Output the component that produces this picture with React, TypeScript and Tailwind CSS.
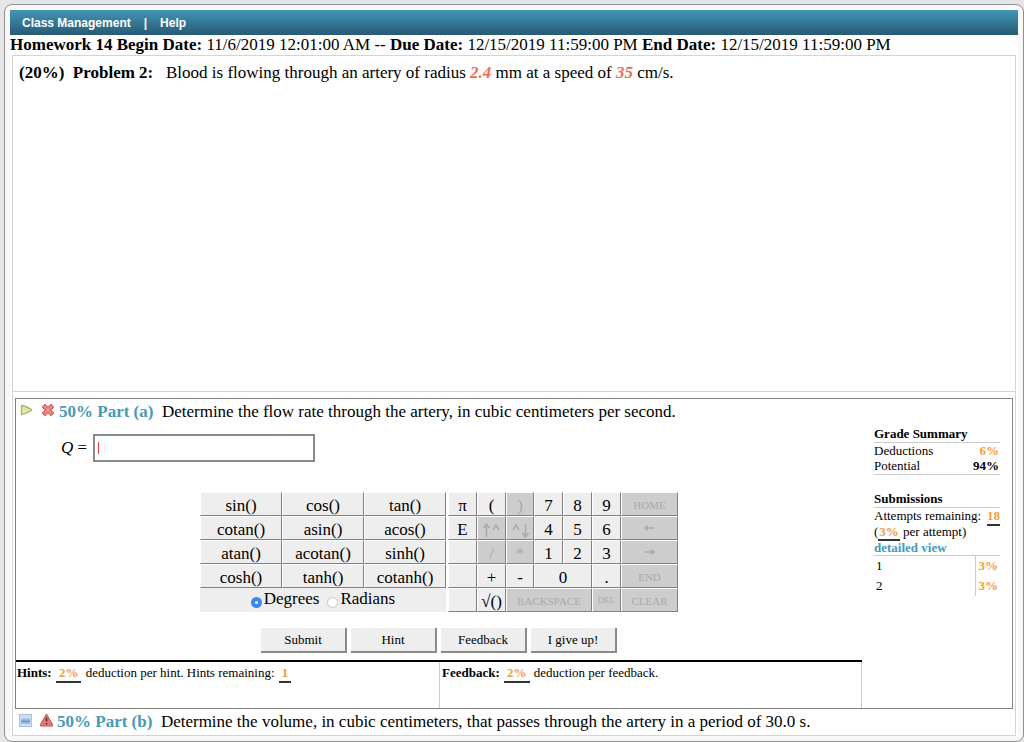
import type { ReactNode } from "react";
import clsx from "clsx";

const functionKeys = [
  "sin()", "cos()", "tan()",
  "cotan()", "asin()", "acos()",
  "atan()", "acotan()", "sinh()",
  "cosh()", "tanh()", "cotanh()",
];

type Key = { label: string; name?: string; off?: boolean; span?: string; size?: string };

const numberKeys: Key[] = [
  { label: "π" }, { label: "(" }, { label: ")", off: true }, { label: "7" }, { label: "8" }, { label: "9" },
  { label: "HOME", off: true, size: "text-[11px]" },
  { label: "E" }, { label: "↑^", name: "Superscript", off: true }, { label: "^↓", name: "Subscript", off: true },
  { label: "4" }, { label: "5" }, { label: "6" },
  { label: "←", name: "Left", off: true },
  { label: "", name: "Blank" }, { label: "/", off: true }, { label: "*", off: true },
  { label: "1" }, { label: "2" }, { label: "3" },
  { label: "→", name: "Right", off: true },
  { label: "", name: "Blank" }, { label: "+" }, { label: "-" }, { label: "0", span: "col-span-2" }, { label: "." },
  { label: "END", off: true, size: "text-[11px]" },
  { label: "", name: "Blank" }, { label: "√()" },
  { label: "BACKSPACE", off: true, span: "col-span-3", size: "text-[11px]" },
  { label: "DEL", off: true, size: "text-[9px]" },
  { label: "CLEAR", off: true, size: "text-[11px]" },
];

const keyDrawings: Record<string, string> = {
  "↑^": "M4.500 15V3M1.500 6l3-4 3 4M11 8l3-5 3 5",
  "^↓": "M2 8l3-5 3 5M14.500 2v12M11.500 11l3 4 3-4",
  "←": "M14 6H5M8 3.500L5 6l3 2.500",
  "→": "M5 6h9M11 3.500L14 6l-3 2.500",
};

function PadKey({ label, name, off, span, size }: Key) {
  return (
    <button
      type="button"
      disabled={off}
      aria-label={name}
      className={clsx(
        "flex h-6 items-center justify-center whitespace-nowrap border-t border-l border-r border-b border-white border-r-[#808080] border-b-[#808080]",
        off ? "bg-[#cdcdcd] text-[#aaa]" : "bg-[#eee] text-black",
        span,
        size ? "pt-0.5" : "pt-1",
        size ?? "text-[17px]"
      )}
    >
      {keyDrawings[label] ? (
        <svg width="19" height="16" viewBox="0 0 19 16" fill="none" stroke="currentColor" strokeWidth="1.500">
          <path d={keyDrawings[label]} />
        </svg>
      ) : (
        label
      )}
    </button>
  );
}

function Score({ children }: { children: ReactNode }) {
  return <b className="text-[#f79a3a]">{children}</b>;
}

function Blank({ children }: { children: ReactNode }) {
  return <b className="mx-px inline-block border-b-2 border-[#333] px-[3px] leading-4 text-[#f79a3a]">{children}</b>;
}

function ActionButton({ children }: { children: ReactNode }) {
  return (
    <button
      type="button"
      className="h-[25px] w-[86px] border-r-2 border-b-2 border-[#8a8a8a] bg-[#eee] text-[13px] leading-5"
    >
      {children}
    </button>
  );
}

function PartLink({ children }: { children: ReactNode }) {
  return (
    <a href="#" className="font-bold text-[#4599b9]">
      {children}
    </a>
  );
}

function AngleRadio({ label, checked }: { label: string; checked?: boolean }) {
  return (
    <label className="flex items-start">
      <input
        type="radio"
        name="angle"
        defaultChecked={checked}
        className="mt-[9px] mr-0.5 size-[11px] appearance-none rounded-full border border-[#c4c4c4] bg-white checked:border-4 checked:border-[#3b86f7]"
      />
      {label}
    </label>
  );
}

function Summary() {
  return (
    <aside className="mt-7 mr-3 w-[126px] shrink-0 text-[13px] leading-4">
      <h2 className="h-4 border-b border-[#ccc] font-bold leading-[14px]">Grade Summary</h2>
      <dl className="grid grid-cols-[1fr_auto] border-b border-[#ccc] pb-px leading-[15px]">
        <dt>Deductions</dt>
        <dd className="pr-px text-right"><Score>6%</Score></dd>
        <dt>Potential</dt>
        <dd className="pr-px text-right font-bold">94%</dd>
      </dl>
      <h2 className="mt-4 border-b border-[#ccc] font-bold">Submissions</h2>
      <p className="flex justify-between whitespace-nowrap">
        Attempts remaining: <b className="border-b-2 border-[#333] leading-4 text-[#f79a3a]">18</b>
      </p>
      <p className="-mt-0.5">
        (<b className="inline-block border-b-2 border-[#333] px-px leading-[14px] text-[#f79a3a]">3%</b> per attempt)
      </p>
      <a href="#" className="block leading-[14px] font-bold text-[#4599b9]">detailed view</a>
      <table className="w-full border-t border-[#ccc] leading-5">
        <tbody>
          {["1", "2"].map((n) => (
            <tr key={n}>
              <td className="pl-0.5">{n}</td>
              <td className="w-[25px] border-l border-[#ccc] pl-[3px]"><Score>3%</Score></td>
            </tr>
          ))}
        </tbody>
      </table>
    </aside>
  );
}

function PartA() {
  return (
    <section className="mx-0.5 mt-1.5 border border-[#808080]">
      <div className="flex">
        <div className="min-w-0 flex-1">
          <div className="flex h-[25px] items-center whitespace-pre pl-1">
            <svg width="13" height="12" viewBox="0 0 13 12" className="-mt-1">
              <path d="M1.500 1.500C4 1.500 8 3.500 11.500 5.500v1C8 8.500 4 10.500 1.500 10.500z" fill="#dce9a8" stroke="#a0b86a" strokeWidth="1.300" />
            </svg>
            <svg width="14" height="14" viewBox="0 0 14 14" className="-mt-1 ml-2 mr-1">
              <path
                d="M1 4L4 1l3 3 3-3 3 3-3 3 3 3-3 3-3-3-3 3-3-3 3-3z"
                fill="#e47772"
                stroke="#bb5350"
                strokeDasharray="2 1"
              />
              <path d="M4 3.500l6 7M10 3.500l-6 7" stroke="#f3a19b" />
            </svg>
            <PartLink>50% Part (a)</PartLink>
            <span>{"  "}Determine the flow rate through the artery, in cubic centimeters per second.</span>
          </div>
          <label className="mt-2.5 ml-[45px] flex items-center gap-1.5">
            <span><i>Q</i> =</span>
            <span className="flex h-7 w-[222px] items-center border-2 border-[#8a8a8a] pl-[3px]">
              <span className="h-3 w-px bg-[#f44336]" />
              <input type="text" className="min-w-0 flex-1 px-1 outline-none" />
            </span>
          </label>
          <div className="mt-[30px] flex justify-center gap-0.5 pr-3">
            <div className="grid h-[120px] grid-cols-[82px_82px_82px] grid-rows-5 bg-[#eee]">
              {functionKeys.map((key) => (
                <button
                  key={key}
                  type="button"
                  className="h-6 border-t border-l border-r border-b border-white border-r-[#808080] border-b-[#808080] bg-[#eee] pt-1 leading-[18px]"
                >
                  {key}
                </button>
              ))}
              <div className="col-span-3 flex justify-center gap-2 leading-[22px]">
                <AngleRadio label="Degrees" checked />
                <AngleRadio label="Radians" />
              </div>
            </div>
            <div className="grid grid-cols-[29px_29px_28px_29px_29px_29px_57px]">
              {numberKeys.map((key, i) => (
                <PadKey key={i} {...key} />
              ))}
            </div>
          </div>
          <div className="mt-4 flex justify-center gap-1 pr-3">
            <ActionButton>Submit</ActionButton>
            <ActionButton>Hint</ActionButton>
            <ActionButton>Feedback</ActionButton>
            <ActionButton>I give up!</ActionButton>
          </div>
        </div>
        <Summary />
      </div>
      <div className="mt-[7px] mr-[150px] grid h-12 grid-cols-2 whitespace-pre border-t-2 border-black text-[13px] leading-[22px]">
        <p className="pl-px">
          <b>Hints:</b> <Blank>2%</Blank> deduction per hint. Hints remaining: <Blank>1</Blank>
        </p>
        <p className="border-x border-[#ccc] pl-0.5">
          <b>Feedback:</b> <Blank>2%</Blank> deduction per feedback.
        </p>
      </div>
    </section>
  );
}

export default function App() {
  return (
    <div className="min-h-screen bg-[#e4e6e8] pt-1 pl-1 font-['Liberation_Serif',serif] text-[17px] text-black">
      <div className="rounded-lg border border-[#8f8f8f] bg-[#f8f8f8] p-[5px]">
        <div className="bg-white">
          <nav className="flex h-[25px] items-center bg-linear-to-b from-[#4397b6] to-[#285a75] pl-3 font-['Liberation_Sans',sans-serif] text-xs font-bold text-white">
            <a href="#">Class Management</a>
            <span className="mx-[13px]">|</span>
            <a href="#">Help</a>
          </nav>
          <p className="h-5 whitespace-nowrap leading-5">
            <b>Homework 14 Begin Date:</b> 11/6/2019 12:01:00 AM -- <b>Due Date:</b> 12/15/2019 11:59:00 PM{" "}
            <b>End Date:</b> 12/15/2019 11:59:00 PM
          </p>
          <main className="mx-0.5 border border-[#d4d4d4]">
            <div className="min-h-[336px] whitespace-pre border-b border-[#d4d4d4] px-1.5 pt-1.5 leading-[22px]">
              <b>(20%)</b>{"  "}<b>Problem 2:</b>{"   "}Blood is flowing through an artery of radius{" "}
              <b className="text-[#f26a56] italic">2.4</b> mm at a speed of{" "}
              <b className="text-[#f26a56] italic">35</b> cm/s.
            </div>
            <PartA />
            <section className="flex h-[26px] items-center whitespace-pre pl-1.5">
              <svg width="13" height="13" viewBox="0 0 13 13" className="-mt-1">
                <defs>
                  <linearGradient id="minus" x1="0" y1="0" x2="0" y2="1">
                    <stop offset="0" stopColor="#bcd3ee" />
                    <stop offset="0.6" stopColor="#6e9cd0" />
                    <stop offset="1" stopColor="#b4cdea" />
                  </linearGradient>
                </defs>
                <rect x="0.500" y="0.500" width="12" height="12" fill="#cfdff1" stroke="#a9c0dc" />
                <rect x="2" y="4" width="9" height="6" fill="url(#minus)" />
              </svg>
              <svg width="13" height="14" viewBox="0 0 13 14" className="-mt-1 ml-2 mr-1">
                <path d="M6.500 1L12.500 11.500v1.500H.5v-1.500z" fill="#e27a76" stroke="#c0504d" strokeLinejoin="round" />
                <path d="M6.500 4.500v4M6.500 10v1.500" stroke="#5d2422" strokeWidth="1.500" />
              </svg>
              <PartLink>50% Part (b)</PartLink>
              <span>{"  "}Determine the volume, in cubic centimeters, that passes through the artery in a period of 30.0 s.</span>
            </section>
          </main>
        </div>
      </div>
    </div>
  );
}
